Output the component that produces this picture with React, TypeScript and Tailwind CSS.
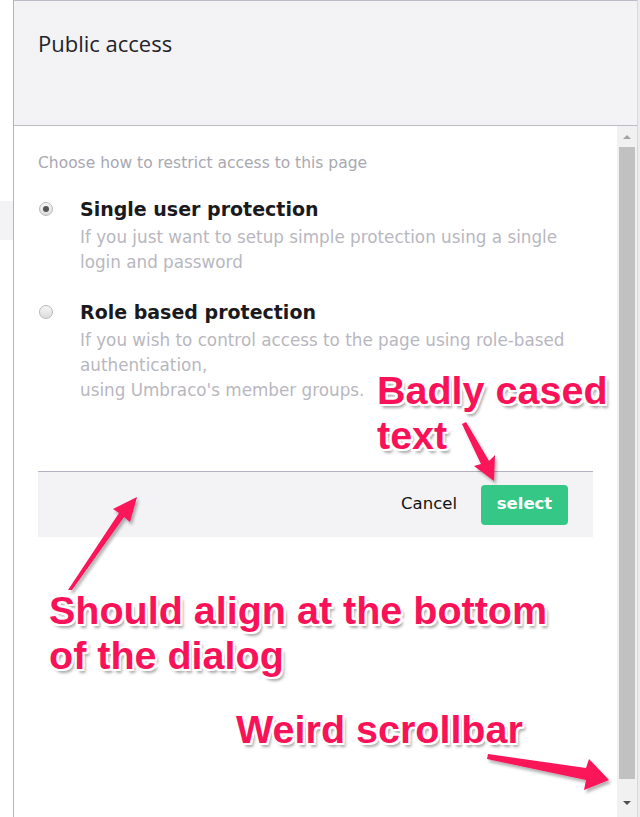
import React from "react";

const noteStyle =
  "absolute font-bold text-[#fa1259] text-[39.5px] leading-[45px] whitespace-nowrap [font-family:'Liberation_Sans',Arial,sans-serif] [text-shadow:0_0_2px_#fff,1px_1px_0_#fff,-1px_-1px_0_#fff,2px_0_0_#fff,-2px_0_0_#fff,0_2px_0_#fff,0_-2px_0_#fff,2px_2px_0_#fff,-2px_2px_0_#fff,2px_-2px_0_#fff,-2px_-2px_0_#fff,3px_4px_3px_rgba(0,0,0,0.35)]";

function Radio({ checked }: { checked?: boolean }) {
  return (
    <div className="w-[14px] h-[14px] rounded-full border border-[#b9b9bd] bg-gradient-to-b from-[#f6f6f6] to-[#dcdcdc] flex items-center justify-center">
      {checked ? <div className="w-[6px] h-[6px] rounded-full bg-[#555]" /> : null}
    </div>
  );
}

function Option({ checked, title, lines }: { checked?: boolean; title: string; lines: string[] }) {
  return (
    <div className="flex">
      <div className="w-[42px] pt-[7px] pl-[1px]">
        <Radio checked={checked} />
      </div>
      <div>
        <div className="text-[19px] leading-[28px] font-bold text-[#1a1a1e]">{title}</div>
        <div className="pt-[2px]">
          {lines.map((l) => (
            <div key={l} className="text-[16.8px] leading-[25px] text-[#b8b7c0]">
              {l}
            </div>
          ))}
        </div>
      </div>
    </div>
  );
}

export default function App() {
  return (
    <div className="relative w-[640px] h-[817px] overflow-hidden bg-white flex [font-family:'DejaVu_Sans','Open_Sans',sans-serif]">
      {/* page behind the dialog */}
      <div className="w-[13px] pt-[201px]">
        <div className="h-[39px] bg-[#f3f3f5]" />
      </div>

      {/* dialog */}
      <div className="flex-1 flex flex-col border-l border-[#b3b1c2]">
        <div className="h-[126px] bg-[#f3f3f5] border-t border-b border-[#bdbcc6] pl-[24px] pt-[26px]">
          <h2 className="text-[22px] text-[#23232b] [font-family:'Open_Sans',sans-serif]">Public access</h2>
        </div>

        <div className="flex-1 flex">
          <div className="flex-1 px-[24px] pt-[27px]">
            <p className="text-[15.5px] leading-[20px] text-[#a9a8b1]">Choose how to restrict access to this page</p>
            <div className="mt-[22px] flex flex-col gap-[23px]">
              <Option
                checked
                title="Single user protection"
                lines={["If you just want to setup simple protection using a single", "login and password"]}
              />
              <Option
                title="Role based protection"
                lines={[
                  "If you wish to control access to the page using role-based",
                  "authentication,",
                  "using Umbraco's member groups.",
                ]}
              />
            </div>

            <div className="mt-[68px] h-[66px] bg-[#f3f3f5] border-t border-[#b3b1c2] flex items-center justify-end gap-[24px] pr-[25px]">
              <button className="text-[16.5px] text-[#111]">Cancel</button>
              <button className="w-[87px] h-[40px] rounded-[4px] bg-[#35c786] text-white text-[16.5px] font-bold">
                select
              </button>
            </div>
          </div>

          {/* scrollbar */}
          <div className="w-[20px] bg-[#f1f1f1] flex flex-col items-center">
            <div className="h-[21px] flex items-center justify-center">
              <div className="w-0 h-0 border-l-[4px] border-r-[4px] border-b-[4px] border-l-transparent border-r-transparent border-b-[#a3a3a3]" />
            </div>
            <div className="w-[16px] flex-1 bg-[#c1c1c1]" />
            <div className="h-[38px] flex items-end justify-center pb-[12px]">
              <div className="w-0 h-0 border-l-[4px] border-r-[4px] border-t-[4px] border-l-transparent border-r-transparent border-t-[#505050]" />
            </div>
          </div>
        </div>
      </div>
      <div className="w-[3px] border-l border-[#d8d8dc] bg-[#ececef]" />

      {/* annotations */}
      <svg className="absolute inset-0 pointer-events-none" width="640" height="817">
        <defs>
          <filter id="sh" x="-20%" y="-20%" width="140%" height="140%">
            <feDropShadow dx="2" dy="3" stdDeviation="1.5" floodColor="#000" floodOpacity="0.3" />
          </filter>
        </defs>
        <g fill="#fa1259" filter="url(#sh)">
          <path d="M462 424 L466 422 L489 461 L495 455 L494 481 L474 466 L481 464 Z" />
          <path d="M68 590 L72 590 L124 517 L130 522 L137 497 L113 509 L119 513 Z" />
          <path d="M487 759 L488 754 L586 768 L589 759 L609 780 L584 790 L586 780 Z" />
        </g>
      </svg>
      <div className={noteStyle + " left-[377px] top-[368px]"}>
        Badly cased
        <br />
        text
      </div>
      <div className={noteStyle + " left-[49px] top-[588px]"}>
        Should align at the bottom
        <br />
        of the dialog
      </div>
      <div className={noteStyle + " left-[236px] top-[707px]"}>Weird scrollbar</div>
    </div>
  );
}
